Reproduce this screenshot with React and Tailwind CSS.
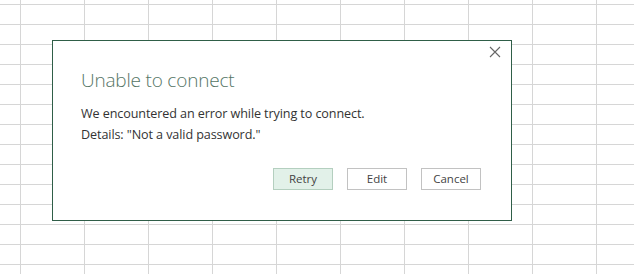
export default function App() {
  return (
    <div className="w-[634px] h-[274px] overflow-hidden bg-white bg-[linear-gradient(to_right,#d6d6d6_1px,transparent_1px),linear-gradient(to_bottom,#d6d6d6_1px,transparent_1px)] bg-[size:64px_20px] bg-[position:20px_4px] pt-[40px] pl-[52px] font-['Open_Sans',sans-serif]">
      <div className="relative w-[460px] h-[181px] bg-white border border-[#2f5e48] pl-[28px] pr-[30px] pt-[26px]">
        <button className="absolute right-[9px] top-[4px] w-[14px] h-[14px] flex items-center justify-center text-[#666]">
          <svg width="12" height="12" viewBox="0 0 12 12" fill="none" stroke="currentColor" strokeWidth="1.1">
            <path d="M1 1L11 11M11 1L1 11" />
          </svg>
        </button>
        <h1 className="text-[19px] leading-[27px] font-light tracking-[-0.2px] text-[#557565]">Unable to connect</h1>
        <div className="mt-[9px] text-[12.6px] leading-[21px] tracking-[-0.1px] text-[#333]">
          <p>We encountered an error while trying to connect.</p>
          <p>Details: "Not a valid password."</p>
        </div>
        <div className="mt-[23px] flex justify-end gap-[14px]">
          <button className="w-[60px] h-[22px] text-[11.5px] text-[#444] bg-[#e2f1e9] border border-[#b4cfbf]">Retry</button>
          <button className="w-[60px] h-[22px] text-[11.5px] text-[#444] bg-white border border-[#c2c2c2]">Edit</button>
          <button className="w-[60px] h-[22px] text-[11.5px] text-[#444] bg-white border border-[#c2c2c2]">Cancel</button>
        </div>
      </div>
    </div>
  );
}
